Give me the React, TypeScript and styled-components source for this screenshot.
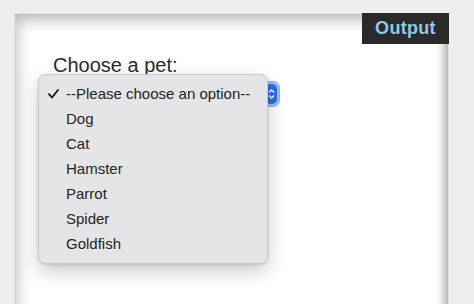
import React from "react";
import styled, { createGlobalStyle } from "styled-components";

const GlobalStyle = createGlobalStyle`
  html, body {
    margin: 0;
    padding: 0;
    background: #eeeeee;
    overflow: hidden;
  }
`;

const Frame = styled.div`
  width: 474px;
  height: 304px;
  box-sizing: border-box;
  padding: 13px 25px 0 14px;
  overflow: hidden;
`;

const Panel = styled.div`
  position: relative;
  height: 330px;
  background: #ffffff;
  border: 1px solid #e2e2e2;
  box-shadow: inset 3px 7px 14px rgba(0, 0, 0, 0.24), inset -8px 0 10px -4px rgba(0, 0, 0, 0.28);
  padding: 40px 0 0 38px;
  box-sizing: border-box;
`;

const OutputBadge = styled.div`
  position: absolute;
  top: -1px;
  right: -1px;
  width: 87px;
  height: 31px;
  background: #2a2a2a;
  color: #8fcbe8;
  font-family: "Liberation Sans", Arial, sans-serif;
  font-weight: 700;
  font-size: 18px;
  letter-spacing: 0.3px;
  display: flex;
  align-items: center;
  justify-content: center;
`;

const Label = styled.label`
  display: block;
  font-family: "Liberation Sans", Arial, sans-serif;
  font-size: 20px;
  line-height: 23px;
  color: #2b2b2b;
`;

const SelectBox = styled.div`
  margin-top: 4px;
  width: 227px;
  height: 26px;
  padding: 2px;
  border-radius: 6px;
  background: #f4f4f4;
  border: 1px solid #cfcfcf;
  box-sizing: border-box;
  display: flex;
  justify-content: flex-end;
`;

const Stepper = styled.span`
  width: 12px;
  height: 20px;
  border-radius: 5px;
  background: #2f6ee0;
  box-shadow: 0 0 0 3px rgba(110, 150, 235, 0.6);
  display: flex;
  align-items: center;
  justify-content: center;
`;

const Menu = styled.ul`
  position: absolute;
  left: 23px;
  top: 60px;
  width: 230px;
  margin: 0;
  padding: 6px 0 7px;
  list-style: none;
  background: #e5e5e7;
  border: 1px solid #c9c9cb;
  border-radius: 8px;
  box-sizing: border-box;
  box-shadow: 0 8px 20px rgba(0, 0, 0, 0.2), 0 1px 3px rgba(0, 0, 0, 0.12);
`;

const Option = styled.li`
  height: 25px;
  padding-left: 9px;
  display: flex;
  align-items: center;
  font-family: "Liberation Sans", Arial, sans-serif;
  font-size: 15px;
  color: #232323;
`;

const CheckSlot = styled.span`
  width: 18px;
  flex: none;
  display: flex;
  align-items: center;
`;

const pets = ["Dog", "Cat", "Hamster", "Parrot", "Spider", "Goldfish"];

export default function App() {
  return (
    <>
      <GlobalStyle />
      <Frame>
        <Panel>
          <OutputBadge>Output</OutputBadge>
          <Label>Choose a pet:</Label>
          <SelectBox>
            <Stepper>
              <svg width="7" height="12" viewBox="0 0 7 12">
                <path d="M1 4.5 L3.5 2 L6 4.5 M1 7.5 L3.5 10 L6 7.5" fill="none" stroke="#fff" strokeWidth="1.4" />
              </svg>
            </Stepper>
          </SelectBox>
          <Menu>
            <Option>
              <CheckSlot>
                <svg width="11" height="10" viewBox="0 0 11 10">
                  <path d="M1 5.2 L4 8.5 L10 1" fill="none" stroke="#111" strokeWidth="1.8" strokeLinecap="round" strokeLinejoin="round" />
                </svg>
              </CheckSlot>
              --Please choose an option--
            </Option>
            {pets.map((p) => (
              <Option key={p}>
                <CheckSlot />
                {p}
              </Option>
            ))}
          </Menu>
        </Panel>
      </Frame>
    </>
  );
}
